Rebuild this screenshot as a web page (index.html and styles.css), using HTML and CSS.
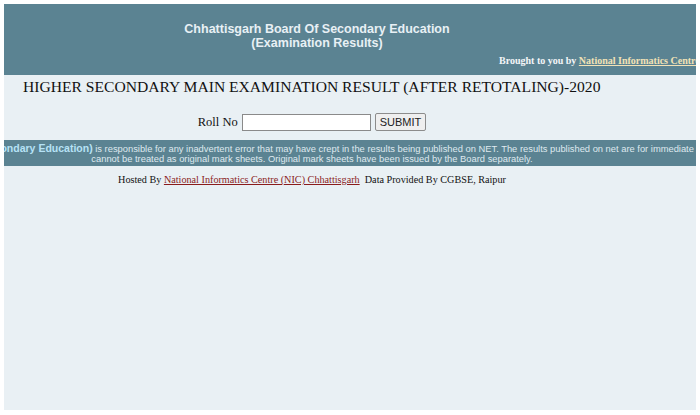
FILE: index.html
```html
<!DOCTYPE html>
<html>
<head>
<meta charset="utf-8">
<title>CGBSE Examination Results</title>
<link rel="stylesheet" href="styles.css">
</head>
<body>
<div class="page">
  <div class="header">
    <div class="col">
      <div class="board">Chhattisgarh Board Of Secondary Education<br>(Examination Results)</div>
      <div class="credit">Brought to you by <a href="#">National Informatics Centre (NIC)</a></div>
    </div>
  </div>
  <div class="col">
    <h1 class="exam">HIGHER SECONDARY MAIN EXAMINATION RESULT (AFTER RETOTALING)-2020</h1>
    <form class="roll">
      <label for="roll">Roll No</label>
      <input id="roll" type="text">
      <button type="button">SUBMIT</button>
    </form>
  </div>
  <div class="notice">
    <div class="col">
      <div class="notice-line"><span class="lead"><b>CGBSE (Chhattisgarh Board Of Secondary Education)</b> is responsible for any inadvertent error that may have crept in the results being published on NET. The results published on net are for immediate information to the examinees. These</span></div>
      <div class="notice-line"><span>cannot be treated as original mark sheets. Original mark sheets have been issued by the Board separately.</span></div>
    </div>
  </div>
  <div class="col">
    <p class="hosted">Hosted By <a href="#">National Informatics Centre (NIC) Chhattisgarh</a>&nbsp; Data Provided By CGBSE, Raipur</p>
  </div>
</div>
</body>
</html>
```
FILE: styles.css
```css
html { background: #ffffff; }
body {
  margin: 4px;
  font-family: "Liberation Serif", "Times New Roman", serif;
}
.page {
  background: #e9f0f4;
  height: 406px;
  overflow: hidden;
}
.col {
  width: 616px;
}
.header {
  background: #5b8392;
  height: 71px;
}
.header .col {
  padding-top: 18px;
}
.board {
  padding-left: 10px;
  font-family: "Liberation Sans", Arial, sans-serif;
  font-weight: bold;
  font-size: 12.5px;
  line-height: 14px;
  color: #e8f0f5;
  text-align: center;
}
.credit {
  margin-top: 5px;
  padding-left: 495px;
  white-space: nowrap;
  font-weight: bold;
  font-size: 10px;
  line-height: 12px;
  color: #f4f6f8;
}
.credit a {
  color: #f2e2b6;
}
.exam {
  margin: 3px 0 0 19px;
  font-weight: normal;
  font-size: 15.6px;
  line-height: 18px;
  color: #111;
  white-space: nowrap;
}
.roll {
  margin: 17px 0 0;
  display: flex;
  justify-content: center;
  align-items: center;
  gap: 3px;
  font-size: 12.5px;
  color: #111;
}
.roll input {
  width: 123px;
  height: 13px;
  margin: 0 0 0 1px;
  padding: 1px 2px;
  border: 1px solid #8a8a8a;
  background: #fff;
}
.roll button {
  margin: 0 0 0 1px;
  height: 18px;
  padding: 0 4px;
  font-family: "Liberation Sans", Arial, sans-serif;
  font-size: 11px;
  color: #222;
  background: #efefef;
  border: 1px solid #8c8c8c;
  border-radius: 2px;
}
.notice {
  margin-top: 9px;
  background: #5b8392;
  padding: 3px 0 2px;
}
.notice-line {
  display: flex;
  justify-content: center;
  white-space: nowrap;
  font-family: "Liberation Sans", Arial, sans-serif;
  font-size: 9.35px;
  line-height: 10px;
  color: #dfe9ef;
}
.notice-line .lead {
  padding-left: 46px;
}
.notice-line b {
  color: #b6e2f6;
  font-size: 10.5px;
}
.hosted {
  margin: 8px 0 0;
  text-align: center;
  font-size: 10.2px;
  line-height: 12px;
  color: #111;
}
.hosted a {
  color: #8a1c1c;
}
```
